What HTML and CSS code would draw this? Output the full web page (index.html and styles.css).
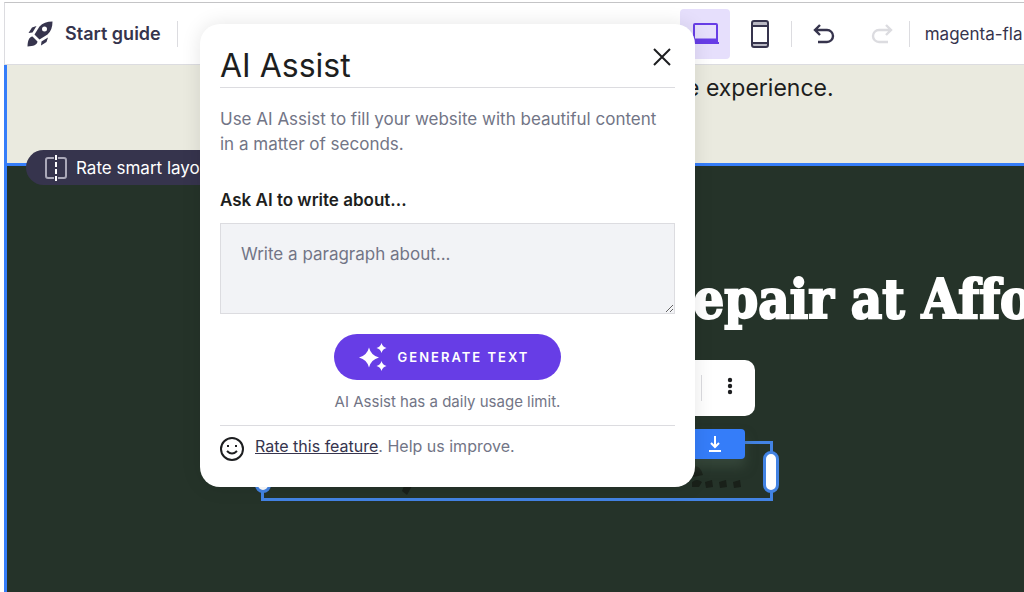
FILE: index.html
```html
<!DOCTYPE html>
<html lang="en">
<head>
  <meta charset="UTF-8">
  <meta name="viewport" content="width=device-width, initial-scale=1.0">
  <title>AI Assist</title>
  <link rel="stylesheet" href="styles.css">
</head>
<body>
  <header class="toolbar">
    <button class="guide" type="button">
      <svg width="26" height="26" viewBox="0 0 26 26" fill="#36344d">
        <path fill-rule="evenodd" d="M25.500 .5C20 .5 15.500 2 12.500 5.500L7.500 13.500L12.500 18.500L20.500 13.500C24 10.500 25.500 6 25.500 .5ZM17.500 5.500a2.500 2.500 0 1 1 0 5a2.500 2.500 0 0 1 0-5Z"/>
        <path d="M9.500 5L5 6.500L1.500 12L5.500 11.500ZM21 16.500L19.500 21L14 24.500L14.500 20.500ZM5.500 15.500C2 16 .8 19.500.5 25.500C6.500 25.200 10 24 10.500 20.500Z"/>
      </svg>
      Start guide
    </button>
    <span class="divider"></span>
    <div class="tools">
      <button class="tool active" type="button" aria-label="Desktop view">
        <svg width="30" height="24" viewBox="0 0 30 24" fill="none" stroke="#673de6" stroke-width="2">
          <rect x="4" y="2" width="23" height="18" rx="1"/>
          <path d="M4 17.500h23v2H4z" fill="#673de6"/>
          <path d="M1 21h28"/>
        </svg>
      </button>
      <button class="tool phone" type="button" aria-label="Mobile view">
        <svg width="20" height="30" viewBox="0 0 20 30" fill="none" stroke="#36344d" stroke-width="2">
          <path d="M2 3h16v3H2zM2 24h16v3H2z" fill="#b9b8c3" stroke="none"/>
          <rect x="2" y="2" width="16" height="26" rx="2"/>
          <path d="M2 7h16M2 24h16"/>
        </svg>
      </button>
      <span class="divider"></span>
      <button class="tool" type="button" aria-label="Undo">
        <svg width="22" height="20" viewBox="0 0 22 20" fill="none" stroke="#36344d" stroke-width="2.400">
          <path d="M7 1L2 6l5 5M2 6h12a6 6 0 0 1 0 12H5"/>
        </svg>
      </button>
      <button class="tool" type="button" aria-label="Redo" disabled>
        <svg width="22" height="20" viewBox="0 0 22 20" fill="none" stroke="#dcdce0" stroke-width="2.400">
          <path d="M15 1l5 5l-5 5M20 6H8a6 6 0 0 0 0 12h9"/>
        </svg>
      </button>
      <span class="divider"></span>
      <span class="site">magenta-fla</span>
    </div>
  </header>

  <main class="canvas">
    <section class="intro">
      <p>e experience.</p>
    </section>
    <section class="hero">
      <h1>Repair at Affo</h1>
    </section>

    <div class="layout-tag">
      <svg width="24" height="26" viewBox="0 0 24 26" fill="none" stroke="#aaa8b8" stroke-width="2">
        <rect x="2" y="3" width="20" height="20" rx="2"/>
        <path d="M12 0v26" stroke="#36344d" stroke-width="4"/>
        <path d="M12 0v26" stroke="#fff" stroke-dasharray="5 2"/>
      </svg>
      Rate smart layout
    </div>

    <div class="element-bar">
      <span class="bar-divider"></span>
      <button type="button" aria-label="More options">
        <svg width="6" height="18" viewBox="0 0 6 18" fill="#1d1e20">
          <circle cx="3" cy="3" r="2.200"/><circle cx="3" cy="9" r="2.200"/><circle cx="3" cy="15" r="2.200"/>
        </svg>
      </button>
    </div>

    <div class="selection">
      <svg class="shadow-marks" width="52" height="28" viewBox="0 0 52 28" fill="#192019">
        <path d="M0 5Q8 2 11 13L1 15zM0 20q5-4 10 0l-3 5H0zM13 20l7-2l1 7l-7 1zM27 20l7-2l1 7l-7 1zM41 20l7-2l1 7l-7 1z"/>
      </svg>
      <svg class="shadow-tail" width="10" height="9" viewBox="0 0 10 9" fill="#192019"><path d="M2 0h8L5 9L0 5z"/></svg>
      <span class="handle left"></span>
      <span class="handle right"></span>
      <button class="download" type="button" aria-label="Move down">
        <svg width="14" height="16" viewBox="0 0 14 16" fill="none" stroke="#fff" stroke-width="2">
          <path d="M7 0v10M3 7l4 4l4-4M1 15h12"/>
        </svg>
      </button>
    </div>
  </main>

  <div class="modal" role="dialog" aria-labelledby="modal-title">
    <div class="modal-head">
      <h2 id="modal-title">AI Assist</h2>
      <button class="close" type="button" aria-label="Close">
        <svg width="18" height="18" viewBox="0 0 18 18" fill="none" stroke="#1d1e20" stroke-width="2">
          <path d="M1 1l16 16M17 1L1 17"/>
        </svg>
      </button>
    </div>
    <p class="lead">Use AI Assist to fill your website with beautiful content in a matter of seconds.</p>
    <label for="prompt">Ask AI to write about...</label>
    <textarea id="prompt" placeholder="Write a paragraph about..."></textarea>
    <button class="generate" type="button">
      <svg width="28" height="28" viewBox="0 0 28 28" fill="#fff">
        <path d="M10 4.500Q12 12.500 20 14.500Q12 16.500 10 24.500Q8 16.500 0 14.500Q8 12.500 10 4.500Z"/>
        <path d="M22.500 0Q23.500 4 27.500 5Q23.500 6 22.500 10Q21.500 6 17.500 5Q21.500 4 22.500 0Z"/>
        <path d="M22.500 18Q23.500 22 27.500 23Q23.500 24 22.500 28Q21.500 24 17.500 23Q21.500 22 22.500 18Z"/>
      </svg>
      GENERATE TEXT
    </button>
    <p class="limit">AI Assist has a daily usage limit.</p>
    <div class="feedback">
      <svg width="24" height="24" viewBox="0 0 24 24" fill="none" stroke="#1d1e20" stroke-width="2">
        <circle cx="12" cy="12" r="11"/>
        <path d="M7 14q5 5 10 0"/>
        <path d="M8 8v2M16 8v2"/>
      </svg>
      <p><a href="#">Rate this feature</a>. Help us improve.</p>
    </div>
  </div>
</body>
</html>
```
FILE: styles.css
```css
* {
  box-sizing: border-box;
}

body {
  margin: 0;
  padding: 2px 0 0 4px;
  min-height: 100vh;
  display: flex;
  flex-direction: column;
  position: relative;
  overflow: hidden;
  font-family: Inter, sans-serif;
  color: #36344d;
  background: #fff;
}

h1, h2, p {
  margin: 0;
}

button {
  font: inherit;
  color: inherit;
  border: none;
  background: none;
  padding: 0;
  cursor: pointer;
}

.toolbar {
  display: flex;
  align-items: center;
  height: 63px;
  padding-left: 22px;
  border-top: 1px solid #c4c4c6;
  border-left: 1px solid #dcdce0;
  border-bottom: 1px solid #dcdce0;
  white-space: nowrap;
}

.guide {
  display: flex;
  align-items: center;
  gap: 12px;
  margin-right: 16px;
  font-size: 18px;
  font-weight: 600;
}

.divider {
  width: 1px;
  height: 26px;
  background: #dcdce0;
}

.tools {
  display: flex;
  align-items: center;
  margin-left: 502px;
}

.tool {
  display: flex;
  align-items: center;
  justify-content: center;
  width: 55px;
  height: 50px;
}

.tool.active {
  width: 50px;
  border-radius: 4px;
  background: #e6dffc;
}

.phone {
  width: 61px;
}

.tools .divider + .tool {
  width: 64px;
}

.tool:disabled {
  width: 53px;
}

.site {
  padding-left: 15px;
  font-size: 17px;
}

.canvas {
  position: relative;
  flex: 1;
  display: flex;
  flex-direction: column;
  border-left: 3px solid #357df9;
  overflow: hidden;
}

.intro {
  height: 98px;
  padding: 8px 0 0 679px;
  background: #eaeadf;
  color: #1d1e20;
  font-size: 23px;
  line-height: 30px;
  white-space: nowrap;
}

.hero {
  flex: 1;
  padding: 100px 0 0 646px;
  border-top: 3px solid #357df9;
  background: #253329;
}

.hero h1 {
  font-family: "DejaVu Serif Condensed", "DejaVu Serif", serif;
  font-size: 54px;
  line-height: 66px;
  color: #fff;
  white-space: nowrap;
  font-variant-ligatures: none;
  -webkit-text-stroke: 2px #fff;
}

/* canvas overlays */
.layout-tag {
  position: absolute;
  top: 85px;
  left: 19px;
  display: flex;
  align-items: center;
  gap: 8px;
  height: 35px;
  padding: 0 20px 0 18px;
  border-radius: 18px;
  background: #36344d;
  color: #fff;
  font-size: 17px;
  white-space: nowrap;
}

.element-bar {
  position: absolute;
  top: 295px;
  left: 593px;
  display: flex;
  align-items: center;
  justify-content: flex-end;
  gap: 25px;
  width: 155px;
  height: 56px;
  padding-right: 22px;
  border-radius: 10px;
  background: #fff;
}

.bar-divider {
  width: 1px;
  height: 26px;
  background: #dcdce0;
}

.selection {
  position: absolute;
  top: 376px;
  left: 254px;
  width: 512px;
  height: 60px;
  border: 3px solid #4383e3;
}

.handle {
  position: absolute;
  top: 7px;
  width: 16px;
  height: 42px;
  border: 3px solid #4383e3;
  border-radius: 8px;
  background: #fff;
}

.handle.left {
  left: -9px;
}

.handle.right {
  right: -9px;
}

.download {
  position: absolute;
  top: -15px;
  right: 25px;
  display: flex;
  align-items: center;
  justify-content: flex-end;
  width: 90px;
  height: 30px;
  padding-right: 23px;
  border-radius: 4px;
  background: #357df9;
  box-shadow: 0 8px 12px rgba(70, 90, 75, 0.5);
}

.shadow-marks {
  position: absolute;
  top: 18px;
  right: 26px;
}

.shadow-tail {
  position: absolute;
  top: 42px;
  left: 138px;
}

.modal {
  position: absolute;
  top: 24px;
  left: 200px;
  display: flex;
  flex-direction: column;
  width: 495px;
  padding: 20px 20px 26px;
  border-radius: 20px;
  background: #fff;
  box-shadow: 0 0 20px rgba(0, 0, 0, 0.1);
  color: #727586;
}

.modal-head {
  display: flex;
  justify-content: space-between;
  align-items: flex-start;
  height: 44px;
  border-bottom: 1px solid #dcdce0;
}

.modal h2 {
  font-size: 32px;
  font-weight: 400;
  line-height: 44px;
  color: #1d1e20;
}

.close {
  display: flex;
  padding: 4px;
}

.lead {
  margin-top: 19px;
  font-size: 17px;
  line-height: 25px;
}

.modal label {
  margin-top: 31px;
  font-size: 17px;
  font-weight: 600;
  line-height: 25px;
  color: #1d1e20;
}

.modal textarea {
  height: 91px;
  margin-top: 10px;
  padding: 18px 20px;
  border: 1px solid #dcdce0;
  border-radius: 0;
  background: #f2f3f6;
  font: inherit;
  font-size: 17px;
  line-height: 25px;
  resize: vertical;
}

.modal textarea::placeholder {
  color: #727586;
}

.generate {
  display: flex;
  align-items: center;
  align-self: center;
  gap: 11px;
  height: 46px;
  margin-top: 20px;
  padding: 0 32px 0 25px;
  border-radius: 23px;
  background: #673de6;
  color: #fff;
  font-size: 13px;
  font-weight: 600;
  letter-spacing: 2px;
}

.limit {
  margin-top: 12px;
  font-size: 15px;
  line-height: 20px;
  text-align: center;
}

.feedback {
  display: flex;
  align-items: flex-end;
  gap: 11px;
  margin-top: 13px;
  padding-top: 8px;
  border-top: 1px solid #dcdce0;
  font-size: 16px;
  line-height: 24px;
}

.feedback svg {
  margin-top: 3px;
}

.feedback p {
  align-self: flex-start;
}

.feedback a {
  color: #36344d;
}
```
